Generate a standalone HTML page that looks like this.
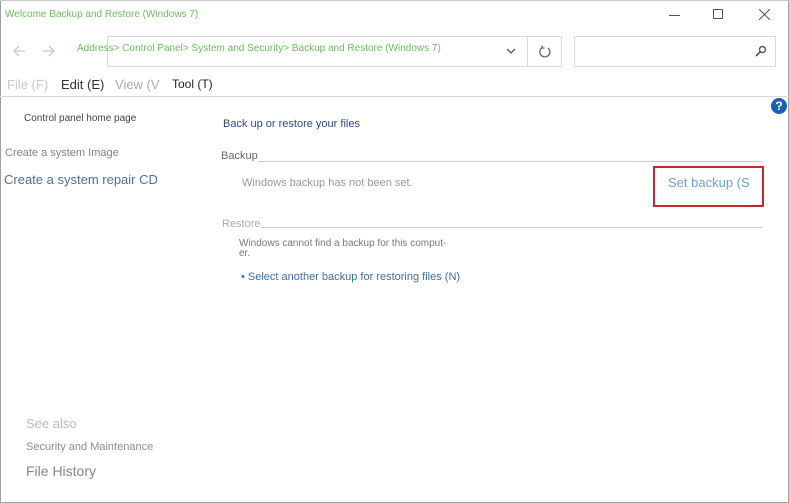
<!DOCTYPE html><html><head><style>
*{margin:0;padding:0;box-sizing:border-box}
body{width:789px;height:503px;position:relative;background:#fff;font-family:"Liberation Sans",sans-serif;overflow:hidden}
.a{position:absolute;white-space:nowrap}
</style></head><body>
<div class="a" style="left:0;top:0;width:789px;height:503px;border:1px solid #a0a0a0;border-top:none"></div>
<div class="a" style="left:0;top:0;width:789px;height:1px;background:#c8c8c8"></div>
<div class="a" style="left:5px;top:9px;font-size:10px;color:#6cbb5e">Welcome Backup and Restore (Windows 7)</div>
<div class="a" style="left:669px;top:15px;width:11px;height:1px;background:#555"></div>
<div class="a" style="left:713px;top:9px;width:10px;height:10px;border:1px solid #555"></div>
<svg class="a" style="left:759px;top:9px" width="11" height="11"><path d="M0 0L11 11M11 0L0 11" stroke="#555" stroke-width="1"/></svg>
<svg class="a" style="left:12px;top:44px" width="14" height="14"><path d="M13 7H2M7 2L2 7L7 12" stroke="#c8c8c8" fill="none" stroke-width="1.3"/></svg>
<svg class="a" style="left:42px;top:44px" width="14" height="14"><path d="M1 7H12M7 2L12 7L7 12" stroke="#c8c8c8" fill="none" stroke-width="1.3"/></svg>
<div class="a" style="left:107px;top:36px;width:421px;height:31px;border:1px solid #d9d9d9"></div>
<div class="a" style="left:527px;top:36px;width:35px;height:31px;border:1px solid #d9d9d9"></div>
<div class="a" style="left:77px;top:43px;font-size:10px;color:#6cbb5e">Address&gt; Control Panel&gt; System and Security&gt; Backup and Restore (Windows 7)</div>
<svg class="a" style="left:506px;top:48px" width="10" height="7"><path d="M1 1L5 5L9 1" stroke="#666" fill="none" stroke-width="1.5"/></svg>
<svg class="a" style="left:538px;top:44px" width="14" height="14"><path d="M10 4A5 5 0 1 1 4.5 3.5M4 1.5V4H6.5" stroke="#666" fill="none" stroke-width="1.3"/></svg>
<div class="a" style="left:574px;top:36px;width:202px;height:31px;border:1px solid #d9d9d9"></div>
<svg class="a" style="left:755px;top:45px" width="12" height="12"><circle cx="7.5" cy="4.5" r="3" stroke="#555" fill="none" stroke-width="1.4"/><path d="M5.5 6.5L1 11" stroke="#555" stroke-width="1.6"/></svg>
<div class="a" style="left:7px;top:77px;font-size:13px;color:#c8c8c8">File (F)</div>
<div class="a" style="left:61px;top:77px;font-size:13px;color:#333">Edit (E)</div>
<div class="a" style="left:115px;top:77px;font-size:13px;color:#aaa">View (V</div>
<div class="a" style="left:172px;top:77px;font-size:12px;color:#222">Tool (T)</div>
<div class="a" style="left:0;top:96px;width:789px;height:1px;background:#d9d9d9"></div>
<div class="a" style="left:771px;top:98px;width:16px;height:16px;border-radius:50%;background:#1a5fb4;color:#fff;font-size:12px;font-weight:bold;text-align:center;line-height:16px">?</div>
<div class="a" style="left:24px;top:113px;font-size:10px;color:#444">Control panel home page</div>
<div class="a" style="left:5px;top:147px;font-size:11px;color:#7a8296">Create a system Image</div>
<div class="a" style="left:4px;top:172px;font-size:13px;color:#4d6fa0">Create a system repair CD</div>
<div class="a" style="left:223px;top:118px;font-size:11px;color:#2b4a80">Back up or restore your files</div>
<div class="a" style="left:221px;top:150px;font-size:11px;color:#666">Backup</div>
<div class="a" style="left:258px;top:161px;width:504px;height:1px;background:#ccc"></div>
<div class="a" style="left:242px;top:177px;font-size:11px;color:#999">Windows backup has not been set.</div>
<div class="a" style="left:653px;top:166px;width:111px;height:41px;border:2px solid #c8262e"></div>
<div class="a" style="left:668px;top:175px;font-size:13px;color:#6c9fcf">Set backup (S</div>
<div class="a" style="left:222px;top:218px;font-size:11px;color:#aaa">Restore</div>
<div class="a" style="left:261px;top:227px;width:501px;height:1px;background:#ccc"></div>
<div class="a" style="left:239px;top:239px;font-size:10px;color:#777;line-height:10px;white-space:normal;width:230px">Windows cannot find a backup for this comput-<br>er.</div>
<div class="a" style="left:241px;top:271px;font-size:11px;color:#3e6ea8">• Select another backup for restoring files (N)</div>
<div class="a" style="left:26px;top:416px;font-size:13px;color:#bbb">See also</div>
<div class="a" style="left:26px;top:441px;font-size:11px;color:#888c99">Security and Maintenance</div>
<div class="a" style="left:26px;top:463px;font-size:14px;color:#808599">File History</div>
</body></html>
